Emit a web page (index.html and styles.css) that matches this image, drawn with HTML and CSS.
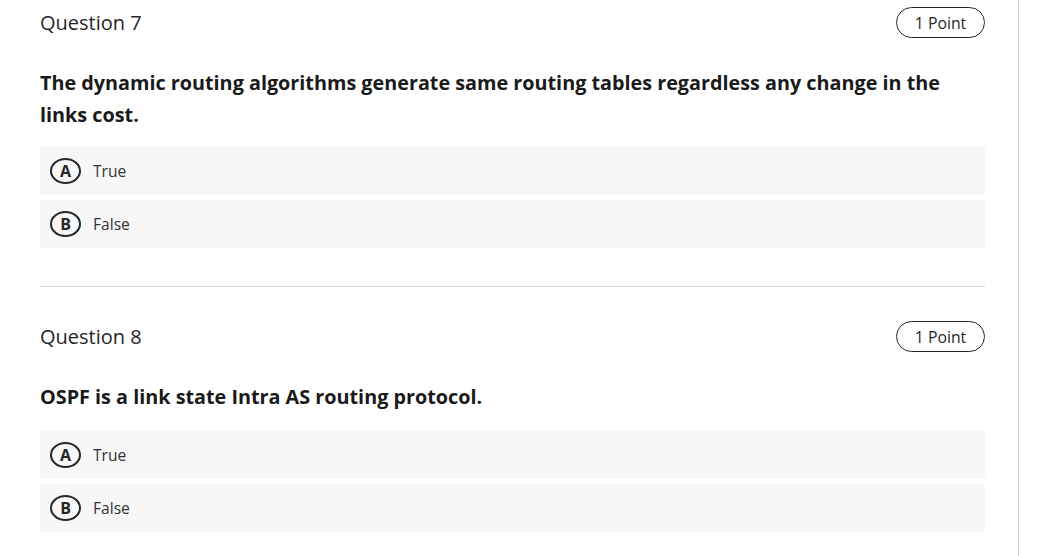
FILE: index.html
```html
<!DOCTYPE html>
<html>
<head>
<meta charset="utf-8">
<link rel="stylesheet" href="styles.css">
</head>
<body>
<div class="page">
  <main class="main">
    <section class="question">
      <div class="q-head">
        <h2 class="q-title">Question 7</h2>
        <span class="badge">1 Point</span>
      </div>
      <p class="q-text">The dynamic routing algorithms generate same routing tables regardless any change in the links cost.</p>
      <div class="options">
        <div class="option"><span class="letter">A</span><span class="label">True</span></div>
        <div class="option"><span class="letter">B</span><span class="label">False</span></div>
      </div>
    </section>
    <hr class="divider">
    <section class="question">
      <div class="q-head">
        <h2 class="q-title">Question 8</h2>
        <span class="badge">1 Point</span>
      </div>
      <p class="q-text q-text-single">OSPF is a link state Intra AS routing protocol.</p>
      <div class="options">
        <div class="option"><span class="letter">A</span><span class="label">True</span></div>
        <div class="option"><span class="letter">B</span><span class="label">False</span></div>
      </div>
    </section>
  </main>
  <aside class="side"></aside>
</div>
</body>
</html>
```

FILE: styles.css
```css
* { box-sizing: border-box; }
html, body { margin: 0; padding: 0; background: #fff; }
body {
  font-family: "Open Sans", "Liberation Sans", sans-serif;
  color: #262626;
  height: 556px;
  overflow: hidden;
}
.page { display: flex; height: 556px; }
.main {
  width: 1019px;
  border-right: 1px solid #d0d0d0;
  padding: 7px 33px 0 40px;
}
.q-head {
  display: flex;
  justify-content: space-between;
  align-items: flex-start;
  height: 32px;
}
.q-title {
  margin: 0;
  font-size: 20px;
  font-weight: 400;
  line-height: 31px;
  color: #262626;
}
.badge {
  display: flex;
  align-items: center;
  justify-content: center;
  width: 89px;
  height: 31px;
  border: 1px solid #262626;
  border-radius: 16px;
  font-size: 15.8px;
  color: #262626;
}
.q-text {
  margin: 28px 0 16px;
  font-size: 19.8px;
  font-weight: 700;
  line-height: 32px;
  color: #1a1a1a;
}
.q-text-single { margin-bottom: 18px; }
.options { display: flex; flex-direction: column; gap: 5px; }
.option {
  display: flex;
  align-items: center;
  height: 48px;
  background: #f7f7f7;
  padding-left: 10px;
  gap: 12px;
}
.letter {
  width: 31px;
  height: 26px;
  flex: none;
  display: flex;
  align-items: center;
  justify-content: center;
  font-size: 16px;
  font-weight: 700;
  border: 2px solid #262626;
  border-radius: 50%;
  color: #262626;
}
.label { font-size: 15.6px; color: #333; }
.divider {
  margin: 38px 0 34px;
  border: 0;
  border-top: 1px solid #d6d6d6;
  height: 0;
}
.side { flex: 1; }
```
